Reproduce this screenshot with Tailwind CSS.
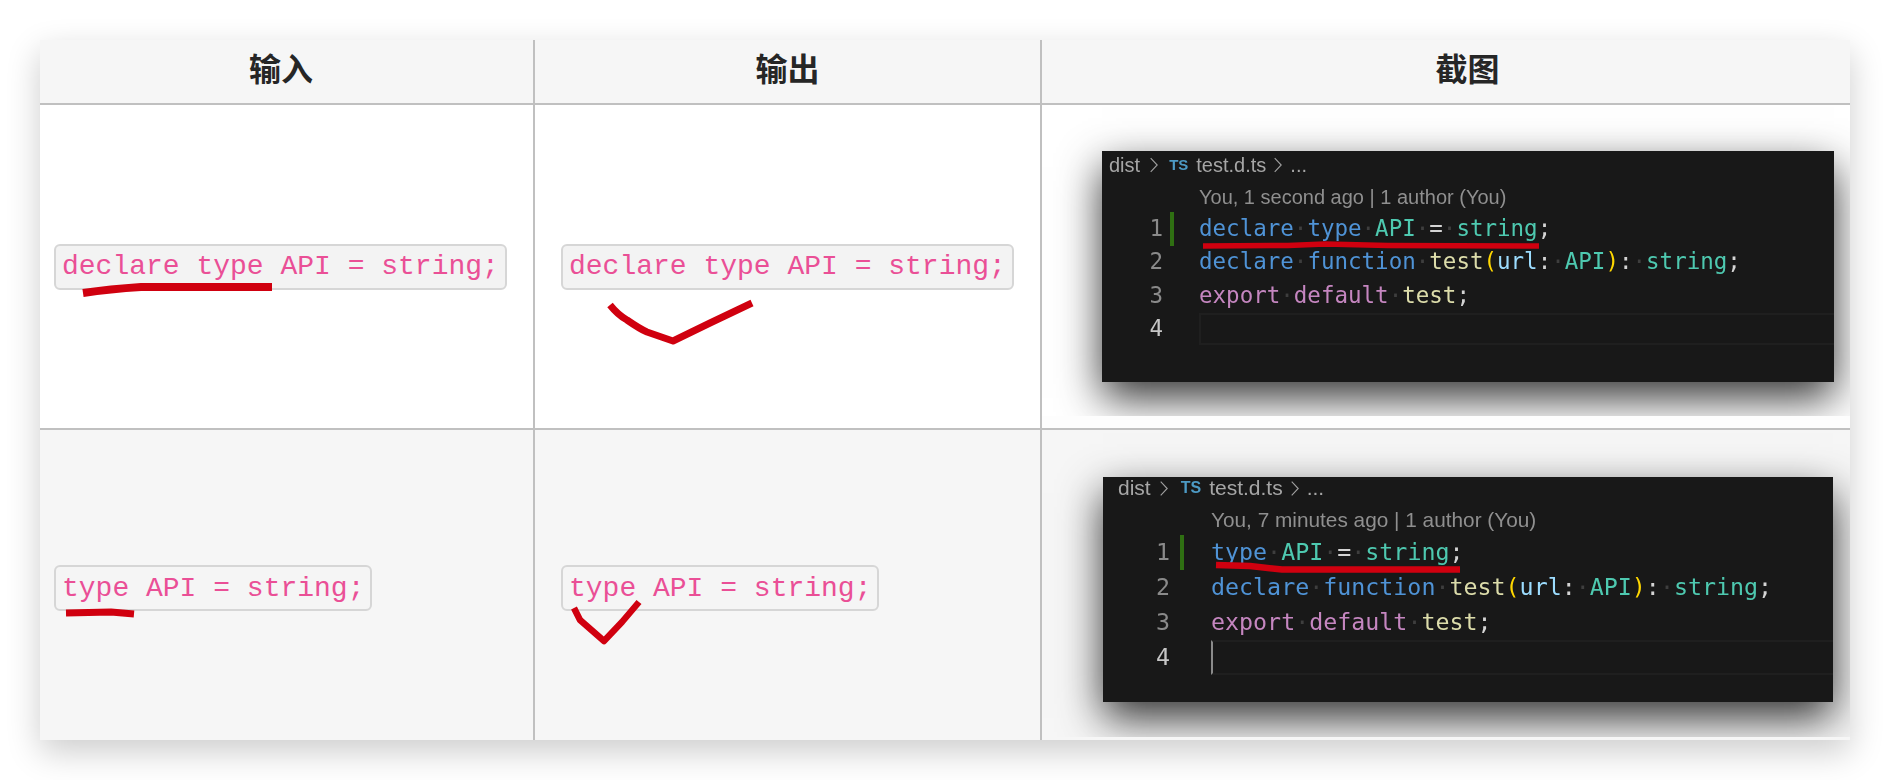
<!doctype html>
<html lang="zh">
<head>
<meta charset="utf-8">
<script src="https://cdn.jsdelivr.net/npm/@tailwindcss/browser@4"></script>
</head>
<body class="bg-white">
<div class="relative w-[1890px] h-[780px] overflow-hidden pt-[40px] pl-[40px]">
  <div class="w-[1810px] h-[700px] grid grid-cols-[495px_507px_808px] grid-rows-[65px_325px_310px] shadow-[0_12px_32px_rgba(0,0,0,0.2)] font-['Liberation_Sans','Noto_Sans_CJK_SC',sans-serif]">
    <div class="bg-[#f6f6f6] border-r-2 border-b-2 border-[#c0c0c0] flex items-center justify-center pr-[11px] pb-[4px] text-[32px] font-bold text-[#262626]">输入</div>
    <div class="bg-[#f6f6f6] border-r-2 border-b-2 border-[#c0c0c0] flex items-center justify-center pb-[4px] text-[32px] font-bold text-[#262626]">输出</div>
    <div class="bg-[#f6f6f6] border-b-2 border-[#c0c0c0] flex items-center justify-center pl-[43px] pb-[4px] text-[32px] font-bold text-[#262626]">截图</div>

    <div class="bg-white border-r-2 border-b-2 border-[#c0c0c0] flex items-center pl-[14px]">
      <code class="h-[46px] flex items-center px-[6px] border-2 border-[#d6d6d6] rounded-[6px] bg-[#f3f3f3] text-[#ea4f96] text-[28px] font-['Liberation_Mono',monospace] whitespace-pre">declare type API = string;</code>
    </div>
    <div class="bg-white border-r-2 border-b-2 border-[#c0c0c0] flex items-center pl-[26px]">
      <code class="h-[46px] flex items-center px-[6px] border-2 border-[#d6d6d6] rounded-[6px] bg-[#f3f3f3] text-[#ea4f96] text-[28px] font-['Liberation_Mono',monospace] whitespace-pre">declare type API = string;</code>
    </div>
    <div class="bg-[#fdfdfd] border-b-2 border-[#c0c0c0]">
      <div class="h-[311px] overflow-hidden bg-white pt-[46px] pl-[60px]">
        <div class="w-[732px] h-[231px] bg-[#181818] shadow-[0_16px_40px_rgba(0,0,0,0.8)] overflow-hidden blur-[0.3px]">
          <div class="flex items-center h-[28px] pl-[7px] text-[20px] text-[#a6a6a6]">
            <span>dist</span>
            <svg class="w-[8px] h-[16px] ml-[10px] mr-[11px]" viewBox="0 0 8 15" fill="none" stroke="#a0a0a0" stroke-width="1.1"><path d="M.7.7l6.5 6.8-6.5 6.8"/></svg>
            <span class="text-[15px] font-bold text-[#4d9ac4] mr-[8px]">TS</span>
            <span>test.d.ts</span>
            <svg class="w-[8px] h-[16px] mx-[8px]" viewBox="0 0 8 15" fill="none" stroke="#a0a0a0" stroke-width="1.1"><path d="M.7.7l6.5 6.8-6.5 6.8"/></svg>
            <span>...</span>
          </div>
          <div class="h-[30px] pl-[97px] flex items-center text-[20px] text-[#8f8f8f] mt-[3px]">You, 1 second ago | 1 author (You)</div>
          <div class="font-['DejaVu_Sans_Mono',monospace] text-[22.5px]">
            <div class="flex h-[33.5px] items-center">
              <span class="w-[68px] pr-[7px] text-[#8a8a8a] h-full flex items-center justify-end">1</span>
              <span class="w-[4px] h-full bg-[#2f6f12] mr-[25px]"></span>
              <span><span class="text-[#4f93d6]">declare</span><span class="text-[#3e3e3e]">·</span><span class="text-[#4f93d6]">type</span><span class="text-[#3e3e3e]">·</span><span class="text-[#4ec9b0]">API</span><span class="text-[#3e3e3e]">·</span><span class="text-[#d4d4d4]">=</span><span class="text-[#3e3e3e]">·</span><span class="text-[#4ec9b0]">string</span><span class="text-[#d4d4d4]">;</span></span>
            </div>
            <div class="flex h-[33.5px] items-center">
              <span class="w-[68px] pr-[7px] text-[#8a8a8a] h-full flex items-center justify-end">2</span>
              <span class="w-[4px] mr-[25px]"></span>
              <span><span class="text-[#4f93d6]">declare</span><span class="text-[#3e3e3e]">·</span><span class="text-[#4f93d6]">function</span><span class="text-[#3e3e3e]">·</span><span class="text-[#dcdcaa]">test</span><span class="text-[#ffd700]">(</span><span class="text-[#9cdcfe]">url</span><span class="text-[#d4d4d4]">:</span><span class="text-[#3e3e3e]">·</span><span class="text-[#4ec9b0]">API</span><span class="text-[#ffd700]">)</span><span class="text-[#d4d4d4]">:</span><span class="text-[#3e3e3e]">·</span><span class="text-[#4ec9b0]">string</span><span class="text-[#d4d4d4]">;</span></span>
            </div>
            <div class="flex h-[33.5px] items-center">
              <span class="w-[68px] pr-[7px] text-[#8a8a8a] h-full flex items-center justify-end">3</span>
              <span class="w-[4px] mr-[25px]"></span>
              <span><span class="text-[#c586c0]">export</span><span class="text-[#3e3e3e]">·</span><span class="text-[#c586c0]">default</span><span class="text-[#3e3e3e]">·</span><span class="text-[#dcdcaa]">test</span><span class="text-[#d4d4d4]">;</span></span>
            </div>
            <div class="flex h-[33.5px] items-center">
              <span class="w-[68px] pr-[7px] text-[#c6c6c6] h-full flex items-center justify-end">4</span>
              <span class="w-[4px] mr-[25px]"></span>
              <span class="flex-1 h-[32px] border-2 border-r-0 border-[#1f1f1f]"></span>
            </div>
          </div>
        </div>
      </div>
    </div>

    <div class="bg-[#f6f6f6] border-r-2 border-[#c0c0c0] flex items-start pl-[14px] pt-[135px]">
      <code class="h-[46px] flex items-center px-[6px] pt-[2px] border-2 border-[#d6d6d6] rounded-[6px] bg-[#f5f5f5] text-[#ea4f96] text-[28px] font-['Liberation_Mono',monospace] whitespace-pre">type API = string;</code>
    </div>
    <div class="bg-[#f6f6f6] border-r-2 border-[#c0c0c0] flex items-start pl-[26px] pt-[135px]">
      <code class="h-[46px] flex items-center px-[6px] pt-[2px] border-2 border-[#d6d6d6] rounded-[6px] bg-[#f5f5f5] text-[#ea4f96] text-[28px] font-['Liberation_Mono',monospace] whitespace-pre">type API = string;</code>
    </div>
    <div class="bg-[#f6f6f6]">
      <div class="h-[307px] overflow-hidden pt-[47px] pl-[61px]">
        <div class="w-[730px] h-[225px] bg-[#181818] shadow-[0_16px_40px_rgba(0,0,0,0.8)] overflow-hidden blur-[0.3px]">
          <div class="flex items-center h-[22px] pl-[15px] text-[21px] text-[#a6a6a6]">
            <span>dist</span>
            <svg class="w-[8px] h-[17px] ml-[9px] mr-[13px]" viewBox="0 0 8 15" fill="none" stroke="#a0a0a0" stroke-width="1.1"><path d="M.7.7l6.5 6.8-6.5 6.8"/></svg>
            <span class="text-[16px] font-bold text-[#4d9ac4] mr-[8px]">TS</span>
            <span>test.d.ts</span>
            <svg class="w-[8px] h-[17px] mx-[8px]" viewBox="0 0 8 15" fill="none" stroke="#a0a0a0" stroke-width="1.1"><path d="M.7.7l6.5 6.8-6.5 6.8"/></svg>
            <span>...</span>
          </div>
          <div class="h-[30px] pl-[108px] flex items-center text-[20.8px] text-[#8f8f8f] mt-[6px]">You, 7 minutes ago | 1 author (You)</div>
          <div class="font-['DejaVu_Sans_Mono',monospace] text-[23.3px]">
            <div class="flex h-[35px] items-center">
              <span class="w-[67px] text-[#8a8a8a] h-full flex items-center justify-end">1</span>
              <span class="w-[4px] h-full bg-[#2f6f12] ml-[10px] mr-[27px]"></span>
              <span><span class="text-[#4f93d6]">type</span><span class="text-[#3e3e3e]">·</span><span class="text-[#4ec9b0]">API</span><span class="text-[#3e3e3e]">·</span><span class="text-[#d4d4d4]">=</span><span class="text-[#3e3e3e]">·</span><span class="text-[#4ec9b0]">string</span><span class="text-[#d4d4d4]">;</span></span>
            </div>
            <div class="flex h-[35px] items-center">
              <span class="w-[67px] text-[#8a8a8a] h-full flex items-center justify-end">2</span>
              <span class="w-[4px] ml-[10px] mr-[27px]"></span>
              <span><span class="text-[#4f93d6]">declare</span><span class="text-[#3e3e3e]">·</span><span class="text-[#4f93d6]">function</span><span class="text-[#3e3e3e]">·</span><span class="text-[#dcdcaa]">test</span><span class="text-[#ffd700]">(</span><span class="text-[#9cdcfe]">url</span><span class="text-[#d4d4d4]">:</span><span class="text-[#3e3e3e]">·</span><span class="text-[#4ec9b0]">API</span><span class="text-[#ffd700]">)</span><span class="text-[#d4d4d4]">:</span><span class="text-[#3e3e3e]">·</span><span class="text-[#4ec9b0]">string</span><span class="text-[#d4d4d4]">;</span></span>
            </div>
            <div class="flex h-[35px] items-center">
              <span class="w-[67px] text-[#8a8a8a] h-full flex items-center justify-end">3</span>
              <span class="w-[4px] ml-[10px] mr-[27px]"></span>
              <span><span class="text-[#c586c0]">export</span><span class="text-[#3e3e3e]">·</span><span class="text-[#c586c0]">default</span><span class="text-[#3e3e3e]">·</span><span class="text-[#dcdcaa]">test</span><span class="text-[#d4d4d4]">;</span></span>
            </div>
            <div class="flex h-[35px] items-center">
              <span class="w-[67px] text-[#c6c6c6] h-full flex items-center justify-end">4</span>
              <span class="w-[4px] ml-[10px] mr-[27px]"></span>
              <span class="flex-1 h-full border-2 border-r-0 border-[#1f1f1f] border-l-[#8a8a8a]"></span>
            </div>
          </div>
        </div>
      </div>
    </div>
  </div>

  <svg class="absolute left-0 top-0 w-[1890px] h-[780px] pointer-events-none" viewBox="0 0 1890 780" fill="none" stroke="#d0000f" stroke-linejoin="round">
    <path stroke-width="8" d="M83 293 Q110 289 141 287 L272 287"/>
    <path stroke-width="7" d="M610 305 Q618 315 627 320 Q640 329 647 332 L673 341 L710 323 L752 303"/>
    <path stroke-width="5.5" d="M1203 246 L1288 245.5 L1325 244 L1388 245.5 L1539 246"/>
    <path stroke-width="6.5" d="M1216 565 L1250 566 L1282 569.5 L1460 569.5"/>
    <path stroke-width="7" d="M66 613 L111 612 L134 614"/>
    <path stroke-width="6.5" d="M574 608 L580 620 L604 641 L622 622 L639 602"/>
  </svg>
</div>
</body>
</html>
